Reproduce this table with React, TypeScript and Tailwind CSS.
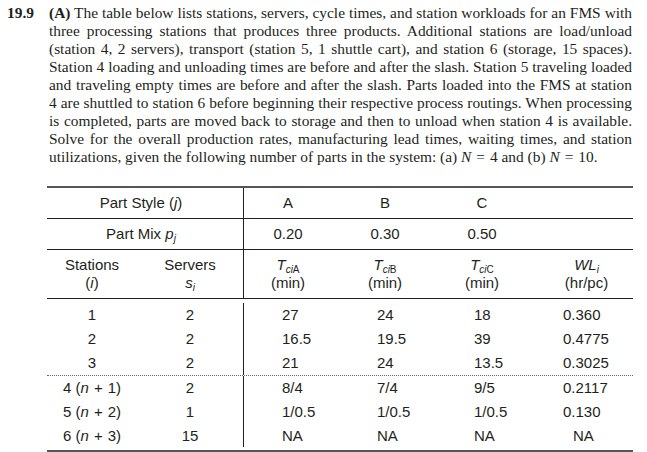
import React from 'react';

const serif = { fontFamily: '"Liberation Serif", "Times New Roman", serif' };

const lines: React.ReactNode[] = [
  <><b>(A)</b> The table below lists stations, servers, cycle times, and station workloads for an FMS with</>,
  'three processing stations that produces three products. Additional stations are load/unload',
  '(station 4, 2 servers), transport (station 5, 1 shuttle cart), and station 6 (storage, 15 spaces).',
  'Station 4 loading and unloading times are before and after the slash. Station 5 traveling loaded',
  'and traveling empty times are before and after the slash. Parts loaded into the FMS at station',
  '4 are shuttled to station 6 before beginning their respective process routings. When processing',
  'is completed, parts are moved back to storage and then to unload when station 4 is available.',
  'Solve for the overall production rates, manufacturing lead times, waiting times, and station',
];

type Row = { st: React.ReactNode; sv: string; a: string; b: string; c: string; wl: string };

const nLabel = (k: number, off: number) => (
  <>
    {k} (<i>n</i>
    <span className="mx-[5px]">+</span>
    {off})
  </>
);

const rowsTop: Row[] = [
  { st: '1', sv: '2', a: '27', b: '24', c: '18', wl: '0.360' },
  { st: '2', sv: '2', a: '16.5', b: '19.5', c: '39', wl: '0.4775' },
  { st: '3', sv: '2', a: '21', b: '24', c: '13.5', wl: '0.3025' },
];

const rowsBottom: Row[] = [
  { st: nLabel(4, 1), sv: '2', a: '8/4', b: '7/4', c: '9/5', wl: '0.2117' },
  { st: nLabel(5, 2), sv: '1', a: '1/0.5', b: '1/0.5', c: '1/0.5', wl: '0.130' },
  { st: nLabel(6, 3), sv: '15', a: 'NA', b: 'NA', c: 'NA', wl: 'NA' },
];

const grid = 'grid grid-cols-[90px_107px_88px_106px_88px_107px]';

function DataRow({ r, cls }: { r: Row; cls: string }) {
  return (
    <div className={`${grid} ${cls}`}>
      <div className="flex items-center justify-center">{r.st}</div>
      <div className="flex items-center justify-center border-r border-[#231f20]">{r.sv}</div>
      <div className="flex items-center pl-[38px]">{r.a}</div>
      <div className="flex items-center pl-[45px]">{r.b}</div>
      <div className="flex items-center pl-[36px]">{r.c}</div>
      <div className={`flex items-center ${r.wl === 'NA' ? 'pl-[47px]' : 'pl-[37px]'}`}>{r.wl}</div>
    </div>
  );
}

// small italic-roman subscript used in the header cells
function Sub({ children }: { children: React.ReactNode }) {
  return <span className="text-[10px] leading-none relative top-[3px]">{children}</span>;
}

function Tc({ p }: { p: string }) {
  return (
    <span className="leading-[18px]">
      <i>T</i>
      <Sub>
        <i>ci</i>
        {p}
      </Sub>
    </span>
  );
}

export default function App() {
  return (
    <div className="w-[647px] h-[452px] bg-white text-[#231f20] overflow-hidden">
      <div className="flex pt-[4px] text-[15.4px] leading-[18px]" style={serif}>
        <div className="w-[49px] pl-[7px] font-bold">19.9</div>
        <div className="w-[583px]">
          {lines.map((l, i) => (
            <div key={i} className="whitespace-nowrap text-justify [text-align-last:justify]">
              {l}
            </div>
          ))}
          <div className="whitespace-nowrap">
            utilizations, given the following number of parts in the system: (a) <i>N</i>
            <span className="mx-[5px]">=</span>4 and (b) <i>N</i>
            <span className="mx-[5px]">=</span>10.
          </div>
        </div>
      </div>

      <div
        className="ml-[47px] mt-[20px] w-[586px] border-t-2 border-b-2 border-[#555] text-[15px] leading-[18px]"
        style={{ fontFamily: '"Liberation Sans", Arial, sans-serif' }}
      >
        <div className={`${grid} h-[31px] border-b border-[#231f20]`}>
          <div className="col-span-2 flex items-center justify-center pr-[8px] border-r border-[#231f20]">
            Part Style (<i>j</i>)
          </div>
          <div className="flex items-center justify-center">A</div>
          <div className="flex items-center justify-center">B</div>
          <div className="flex items-center justify-center">C</div>
          <div />
        </div>
        <div className={`${grid} h-[31px] border-b border-[#231f20]`}>
          <div className="col-span-2 flex items-center justify-center pr-[8px] border-r border-[#231f20]">
            <span>
              Part Mix <i>p</i>
              <Sub>
                <i>j</i>
              </Sub>
            </span>
          </div>
          <div className="flex items-center justify-center">0.20</div>
          <div className="flex items-center justify-center">0.30</div>
          <div className="flex items-center justify-center">0.50</div>
          <div />
        </div>
        <div className={`${grid} h-[49px] border-b border-[#231f20]`}>
          <div className="flex flex-col items-center justify-center">
            <span>Stations</span>
            <span>
              (<i>i</i>)
            </span>
          </div>
          <div className="flex flex-col items-center justify-center border-r border-[#231f20]">
            <span>Servers</span>
            <span>
              <i>s</i>
              <Sub>
                <i>i</i>
              </Sub>
            </span>
          </div>
          <div className="flex flex-col items-center justify-center">
            <Tc p="A" />
            <span>(min)</span>
          </div>
          <div className="flex flex-col items-center justify-center">
            <Tc p="B" />
            <span>(min)</span>
          </div>
          <div className="flex flex-col items-center justify-center">
            <Tc p="C" />
            <span>(min)</span>
          </div>
          <div className="flex flex-col items-center justify-center pl-[14px]">
            <span>
              <i>WL</i>
              <Sub>
                <i>i</i>
              </Sub>
            </span>
            <span>(hr/pc)</span>
          </div>
        </div>
        {rowsTop.map((r, i) => (
          <DataRow
            key={i}
            r={r}
            cls={i === 0 ? 'h-[28px] pt-[4px]' : i === 2 ? 'h-[25px] border-b border-dotted border-[#666]' : 'h-[24px]'}
          />
        ))}
        {rowsBottom.map((r, i) => (
          <DataRow key={i} r={r} cls={i === 2 ? 'h-[26px] pb-[3px]' : 'h-[24px]'} />
        ))}
      </div>
    </div>
  );
}
